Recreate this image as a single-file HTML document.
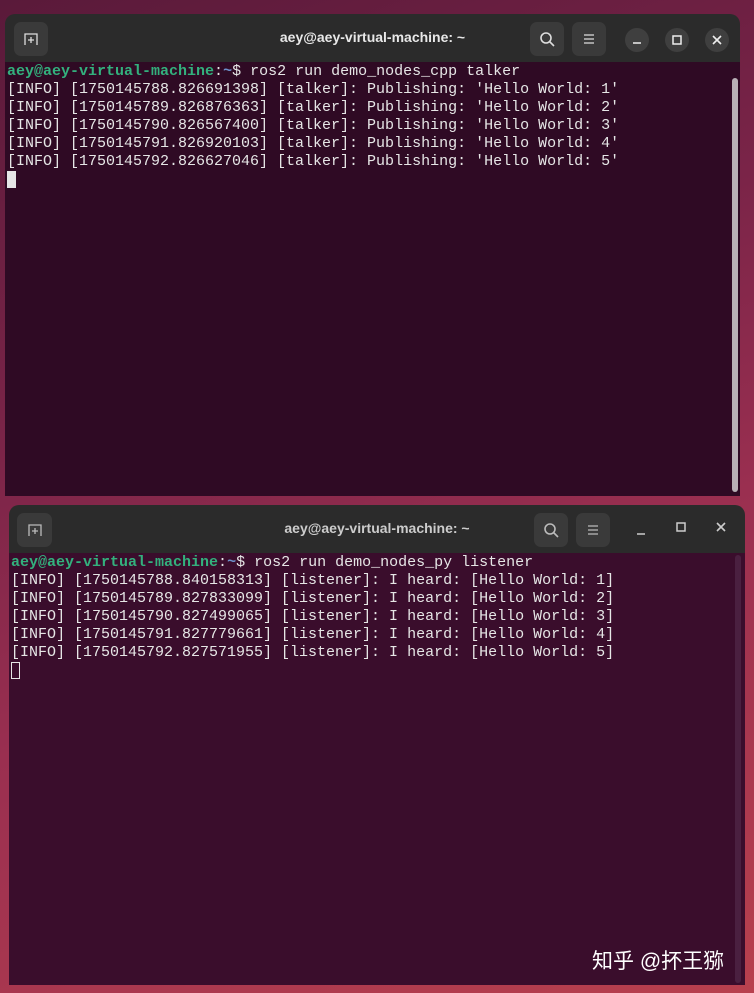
<!DOCTYPE html>
<html><head><meta charset="utf-8"><style>
*{margin:0;padding:0;box-sizing:border-box}
body{width:754px;height:993px;overflow:hidden;position:relative;
background:linear-gradient(160deg,#5a1a3a 0%,#7a2448 35%,#9a2f50 60%,#b8404e 100%);
font-family:"Liberation Sans",sans-serif}
.win{position:absolute;border-radius:10px 10px 0 0;overflow:hidden}
.hdr{position:absolute;left:0;right:0;top:0;height:48px;background:#2b2b2b}
.term{position:absolute;left:0;right:0;top:48px;bottom:0}
.title{position:absolute;left:0;right:0;top:15px;text-align:center;color:#e8e8e8;font-weight:bold;font-size:14px}
.btn{position:absolute;top:8px;width:34px;height:34px;border-radius:7px;background:#3a3a3a}
.circ{position:absolute;top:14px;width:24px;height:24px;border-radius:50%;background:#3f3f3f}
pre{position:absolute;left:2px;top:1px;font-family:"Liberation Mono",monospace;font-size:15px;line-height:18px;color:#e6e6e6}
.g{color:#33b07d;font-weight:bold}.b{color:#6d8fc9;font-weight:bold}
svg{position:absolute}
</style></head><body>
<div class="win" style="left:5px;top:14px;width:735px;height:482px">
 <div class="hdr">
  <div class="btn" style="left:9px"></div>
  <svg style="left:17px;top:16px" width="18" height="18" viewBox="0 0 18 18" fill="none" stroke="#ddd" stroke-width="1.3"><path d="M3 15V4h12v11M9 7v6M6 10h6"/></svg>
  <div class="title">aey@aey-virtual-machine: ~</div>
  <div class="btn" style="left:525px"></div>
  <svg style="left:533px;top:16px" width="18" height="18" viewBox="0 0 18 18" fill="none" stroke="#ddd" stroke-width="1.6"><circle cx="8" cy="8" r="5"/><path d="M12 12l4 4"/></svg>
  <div class="btn" style="left:567px"></div>
  <svg style="left:575px;top:16px" width="18" height="18" viewBox="0 0 18 18" stroke="#ddd" stroke-width="1.3"><path d="M4 5h10M4 9h10M4 13h10"/></svg>
  <div class="circ" style="left:620px"></div>
  <svg style="left:620px;top:14px" width="24" height="24" viewBox="0 0 24 24" stroke="#eee" stroke-width="1.5"><path d="M8 15h8"/></svg>
  <div class="circ" style="left:660px"></div>
  <svg style="left:660px;top:14px" width="24" height="24" viewBox="0 0 24 24" fill="none" stroke="#eee" stroke-width="1.5"><rect x="8" y="8" width="8" height="8"/></svg>
  <div class="circ" style="left:700px"></div>
  <svg style="left:700px;top:14px" width="24" height="24" viewBox="0 0 24 24" stroke="#eee" stroke-width="1.6"><path d="M8 8l8 8M16 8l-8 8"/></svg>
 </div>
 <div class="term" style="background:#2f0a24">
<pre><span class="g">aey@aey-virtual-machine</span>:<span class="b">~</span>$ ros2 run demo_nodes_cpp talker
[INFO] [1750145788.826691398] [talker]: Publishing: 'Hello World: 1'
[INFO] [1750145789.826876363] [talker]: Publishing: 'Hello World: 2'
[INFO] [1750145790.826567400] [talker]: Publishing: 'Hello World: 3'
[INFO] [1750145791.826920103] [talker]: Publishing: 'Hello World: 4'
[INFO] [1750145792.826627046] [talker]: Publishing: 'Hello World: 5'
<span style="background:#e6e6e6"> </span></pre>
  <div style="position:absolute;left:727px;top:16px;width:6px;height:414px;background:#b8b0b6;border-radius:3px"></div>
 </div>
</div>
<div class="win" style="left:9px;top:505px;width:736px;height:480px">
 <div class="hdr">
  <div class="btn" style="left:8px;width:35px"></div>
  <svg style="left:17px;top:16px" width="18" height="18" viewBox="0 0 18 18" fill="none" stroke="#bbb" stroke-width="1.3"><path d="M3 15V4h12v11M9 7v6M6 10h6"/></svg>
  <div class="title" style="color:#ccc">aey@aey-virtual-machine: ~</div>
  <div class="btn" style="left:525px"></div>
  <svg style="left:533px;top:16px" width="18" height="18" viewBox="0 0 18 18" fill="none" stroke="#bbb" stroke-width="1.6"><circle cx="8" cy="8" r="5"/><path d="M12 12l4 4"/></svg>
  <div class="btn" style="left:567px"></div>
  <svg style="left:575px;top:16px" width="18" height="18" viewBox="0 0 18 18" stroke="#bbb" stroke-width="1.3"><path d="M4 5h10M4 9h10M4 13h10"/></svg>
  <svg style="left:620px;top:14px" width="24" height="24" viewBox="0 0 24 24" stroke="#ccc" stroke-width="1.5"><path d="M8 15h8"/></svg>
  <svg style="left:660px;top:10px" width="24" height="24" viewBox="0 0 24 24" fill="none" stroke="#ccc" stroke-width="1.5"><rect x="8" y="8" width="8" height="8"/></svg>
  <svg style="left:700px;top:10px" width="24" height="24" viewBox="0 0 24 24" stroke="#ccc" stroke-width="1.6"><path d="M8 8l8 8M16 8l-8 8"/></svg>
 </div>
 <div class="term" style="background:#3a0d2c">
<pre><span class="g">aey@aey-virtual-machine</span>:<span class="b">~</span>$ ros2 run demo_nodes_py listener
[INFO] [1750145788.840158313] [listener]: I heard: [Hello World: 1]
[INFO] [1750145789.827833099] [listener]: I heard: [Hello World: 2]
[INFO] [1750145790.827499065] [listener]: I heard: [Hello World: 3]
[INFO] [1750145791.827779661] [listener]: I heard: [Hello World: 4]
[INFO] [1750145792.827571955] [listener]: I heard: [Hello World: 5]
<span style="outline:1px solid #e6e6e6;outline-offset:-1px"> </span></pre>
  <div style="position:absolute;left:726px;top:2px;width:6px;height:428px;background:#4a2040;border-radius:3px"></div>
  <div style="position:absolute;left:583px;top:392px;color:#fff;font-family:'Liberation Sans','Noto Sans CJK SC',sans-serif;font-size:21px">知乎 @抔王猕</div>
 </div>
</div>
</body></html>
